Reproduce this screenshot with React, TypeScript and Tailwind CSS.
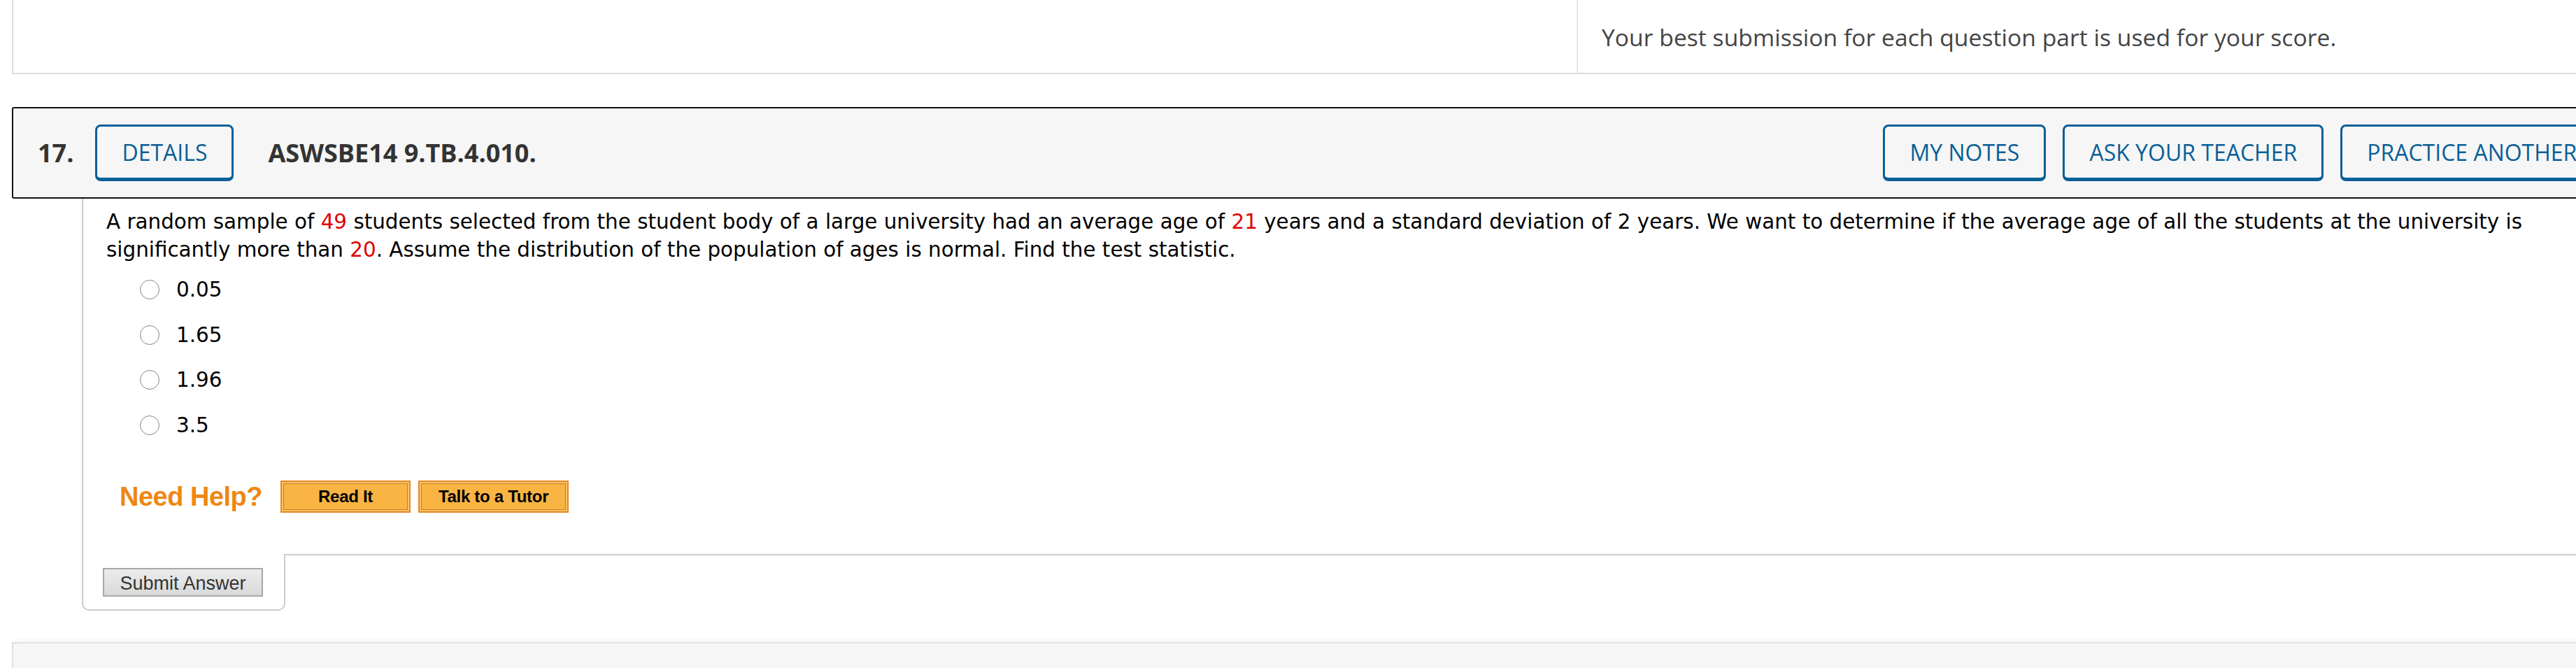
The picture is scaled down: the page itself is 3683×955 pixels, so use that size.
const openSans = "font-['Open_Sans',sans-serif]";

function OutlineButton({ label }: { label: string }) {
  return (
    <button
      className={`flex h-[81px] shrink-0 items-center rounded-[8px] border-[3px] border-b-[5px] border-[#0a5f96] px-[35px] text-[32px] text-[#0a5f96] ${openSans}`}
    >
      {label}
    </button>
  );
}

function HelpButton({ label }: { label: string }) {
  return (
    <button className="flex h-[46px] w-full items-center justify-center border-2 border-[#e8881e] bg-[#fab443] shadow-[inset_0_0_0_2px_#f7c46e,inset_0_0_0_3px_#c9801f] font-['Liberation_Sans',Arial,sans-serif] text-[24px] font-bold tracking-[-0.3px] text-black">
      {label}
    </button>
  );
}

const choices = ["0.05", "1.65", "1.96", "3.5"];

export default function App() {
  return (
    <div className="h-[955px] w-[3683px] overflow-hidden bg-white">
      <div className="w-[3800px] pl-[17px]">
        {/* previous question footer */}
        <div className="flex h-[106px] border-b-2 border-l-2 border-[#dddddd]">
          <div className="w-[2235px]" />
          <div className="flex-1 border-l-2 border-[#e8e8e8] pl-[34px] pt-[28px]">
            <p className={`text-[33.7px] text-[#444] ${openSans}`}>
              Your best submission for each question part is used for your score.
            </p>
          </div>
        </div>

        {/* question header */}
        <div className="mt-[47px] flex h-[131px] items-center rounded-[3px] border-2 border-[#111] bg-[#f6f6f6] pl-[35px]">
          <span className={`text-[36px] font-bold text-[#333] ${openSans}`}>17.</span>
          <div className="ml-[31px]">
            <OutlineButton label="DETAILS" />
          </div>
          <div className="ml-[49px] w-[2309px] shrink-0">
            <span className={`text-[36px] font-bold text-[#333] ${openSans}`}>ASWSBE14 9.TB.4.010.</span>
          </div>
          <div className="flex gap-[24px]">
            <OutlineButton label="MY NOTES" />
            <OutlineButton label="ASK YOUR TEACHER" />
            <OutlineButton label="PRACTICE ANOTHER" />
          </div>
        </div>

        {/* question body */}
        <div className="ml-[100px]">
          <div className="h-[508px] border-x-2 border-[#cccccc] pl-[33px] pt-[13px] font-['DejaVu_Sans',Verdana,sans-serif] text-[29.4px] leading-[40px] text-black">
            <p>
              A random sample of <span className="text-[#e00000]">49</span> students selected from the student body of a
              large university had an average age of <span className="text-[#e00000]">21</span> years and a standard
              deviation of 2 years. We want to determine if the average age of all the students at the university is
              <br />
              significantly more than <span className="text-[#e00000]">20</span>. Assume the distribution of the
              population of ages is normal. Find the test statistic.
            </p>
            <div className="mt-[5px] flex flex-col pl-[48px]">
              {choices.map((c) => (
                <label key={c} className="flex h-[64.5px] items-center gap-[24px]">
                  <span className="h-[28px] w-[28px] rounded-full border-[1.5px] border-[#858585] bg-white" />
                  <span>{c}</span>
                </label>
              ))}
            </div>
            <div className="mt-[47px] flex items-center">
              <span className="ml-[19px] font-['Liberation_Sans',Arial,sans-serif] text-[38px] font-bold tracking-[-0.5px] text-[#ee8711]">
                Need Help?
              </span>
              <div className="ml-[26px] flex gap-[11px]">
                <div className="w-[186px]">
                  <HelpButton label="Read It" />
                </div>
                <div className="w-[215px]">
                  <HelpButton label="Talk to a Tutor" />
                </div>
              </div>
            </div>
          </div>
          <div className="flex">
            <div className="h-[81px] w-[291px] rounded-b-[10px] border-x-2 border-b-2 border-[#cccccc] pl-[28px] pt-[20px]">
              <button className="h-[41px] w-[229px] border-2 border-[#a8a8a8] bg-gradient-to-b from-[#ececec] to-[#d9d9d9] font-['Liberation_Sans',Arial,sans-serif] text-[27px] text-[#333]">
                Submit Answer
              </button>
            </div>
            <div className="flex-1 border-t-2 border-[#cccccc]" />
          </div>
        </div>

        {/* next question */}
        <div className="mt-[45px] h-[60px] border-l-2 border-t-2 border-[#e0e0e0] bg-[#f6f6f6] shadow-[0_-6px_8px_-4px_rgba(0,0,0,0.06)]" />
      </div>
    </div>
  );
}
